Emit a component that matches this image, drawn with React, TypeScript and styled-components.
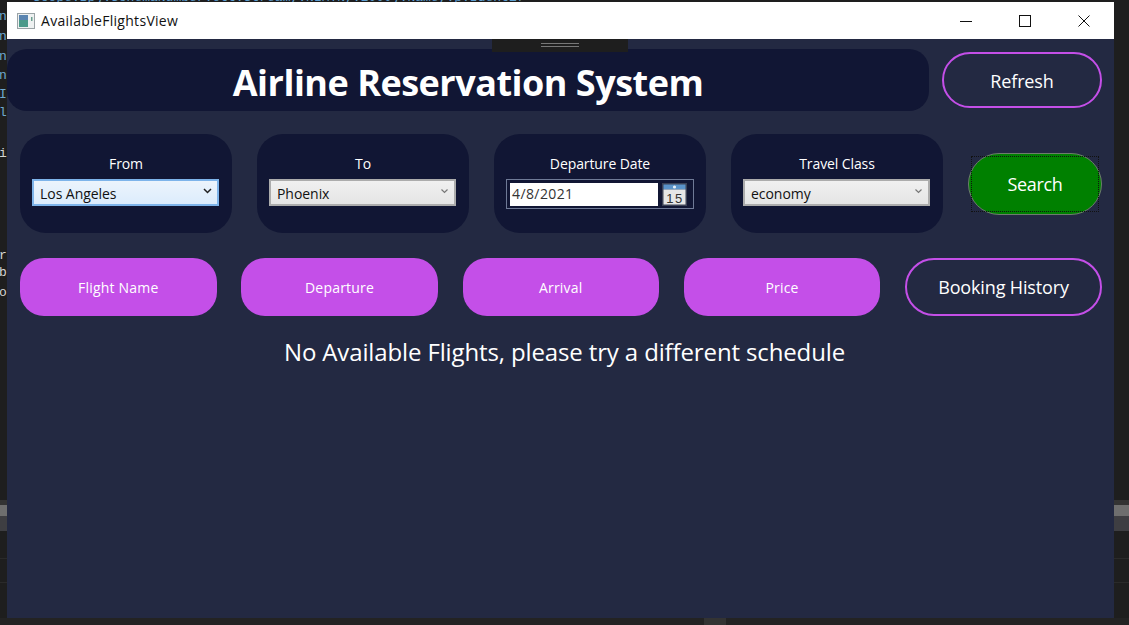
import React from "react";
import styled, { createGlobalStyle } from "styled-components";

const Global = createGlobalStyle`
  html, body { margin: 0; padding: 0; background: #1e1e1e; }
  body { font-family: "Open Sans", "Noto Sans", sans-serif; }
`;

const Desktop = styled.div`
  position: relative;
  width: 1129px;
  height: 625px;
  overflow: hidden;
  background: #1e1e1e;
`;
const CodeLine = styled.div<{ $top: number; $color: string }>`
  position: absolute;
  left: -1px;
  top: ${(p) => p.$top}px;
  font: 13px/16px "Liberation Mono", monospace;
  color: ${(p) => p.$color};
`;
const TopCode = styled.div`
  position: absolute;
  left: 33px;
  top: -10px;
  font: 13px/16px "Liberation Mono", monospace;
  color: #5f9fd0;
  white-space: pre;
`;
const Band = styled.div<{ $top: number; $h: number; $color: string }>`
  position: absolute;
  left: 0;
  right: 0;
  top: ${(p) => p.$top}px;
  height: ${(p) => p.$h}px;
  background: ${(p) => p.$color};
`;
const StatusChip = styled.div`
  position: absolute;
  left: 704px;
  top: 618px;
  width: 22px;
  height: 7px;
  background: #333;
`;
const Window = styled.div`
  position: absolute;
  left: 7px;
  top: 2px;
  width: 1107px;
  height: 616px;
  display: flex;
  flex-direction: column;
  background: #232942;
`;
const TitleBar = styled.div`
  height: 37px;
  flex: none;
  display: flex;
  align-items: center;
  background: #fff;
  color: #111;
  font-size: 14px;
  padding: 0 1px 0 10px;
`;
const TitleText = styled.span`
  margin-left: 6px;
  flex: 1;
  letter-spacing: 0.3px;
`;
const WinButton = styled.div`
  width: 59px;
  height: 37px;
  display: flex;
  align-items: center;
  justify-content: center;
`;
const Toolbar = styled.div`
  position: absolute;
  left: 485px;
  top: 37px;
  width: 136px;
  height: 13px;
  background: #1e1e1e;
  display: flex;
  align-items: flex-start;
  justify-content: center;
  padding-top: 4px;
  box-sizing: border-box;
`;
const Grip = styled.div`
  width: 38px;
  height: 4px;
  border-top: 1px solid #777;
  border-bottom: 1px solid #777;
  box-sizing: border-box;
`;
const Body = styled.div`
  flex: 1;
  display: flex;
  flex-direction: column;
  padding: 10px 12px 0 0;
`;
const HeaderRow = styled.div`
  display: flex;
  align-items: center;
  justify-content: space-between;
  height: 62px;
`;
const HeaderBar = styled.h1`
  margin: 0;
  width: 922px;
  height: 62px;
  box-sizing: border-box;
  padding-top: 4px;
  background: #111634;
  border-radius: 20px;
  color: #fff;
  display: flex;
  align-items: center;
  justify-content: center;
  font-size: 36px;
  font-weight: 700;
  letter-spacing: -0.5px;
`;
const OutlineButton = styled.button<{ $w: number; $h: number; $size: number; $pt: number }>`
  width: ${(p) => p.$w}px;
  height: ${(p) => p.$h}px;
  box-sizing: border-box;
  background: transparent;
  border: 2.5px solid #c44fe8;
  border-radius: ${(p) => p.$h / 2}px;
  color: #fff;
  font-family: inherit;
  font-size: ${(p) => p.$size}px;
  padding: ${(p) => p.$pt}px 0 0;
  letter-spacing: -0.15px;
`;
const SearchRow = styled.div`
  display: flex;
  align-items: center;
  justify-content: space-between;
  margin: 23px 0 0 13px;
`;
const Cards = styled.div`
  display: flex;
  gap: 25px;
`;
const Card = styled.div`
  width: 212px;
  height: 99px;
  box-sizing: border-box;
  padding-top: 20px;
  background: #111634;
  border-radius: 26px;
  display: flex;
  flex-direction: column;
  align-items: center;
`;
const Label = styled.div`
  color: #fff;
  font-size: 14px;
  line-height: 20px;
  letter-spacing: -0.1px;
  margin-bottom: 5px;
`;
const Select = styled.div<{ $focused?: boolean }>`
  width: 187px;
  height: 27px;
  align-self: flex-start;
  margin-left: 12px;
  box-sizing: border-box;
  border: 2px solid ${(p) => (p.$focused ? "#7eb4ea" : "#acacac")};
  background: ${(p) =>
    p.$focused
      ? "linear-gradient(#ecf4fc, #dcecfc)"
      : "linear-gradient(#f0f0f0, #e5e5e5)"};
  color: #111;
  font-size: 14px;
  letter-spacing: -0.05px;
  display: flex;
  align-items: center;
  justify-content: space-between;
  padding: 1px 5px 0 6px;
`;
const ChevronSvg = styled.svg`
  margin-bottom: 5px;
`;
const DateBox = styled.div`
  width: 188px;
  height: 30px;
  align-self: flex-start;
  margin-left: 12px;
  box-sizing: border-box;
  border: 1px solid #6f7a96;
  display: flex;
  align-items: center;
  padding: 0 6px 0 3px;
  gap: 4px;
`;
const DateInput = styled.div`
  width: 148px;
  height: 23px;
  background: #fff;
  color: #333;
  font-size: 14px;
  letter-spacing: 0.4px;
  line-height: 22px;
  padding-left: 2px;
  box-sizing: border-box;
`;
const SearchButton = styled.button`
  position: relative;
  width: 134px;
  height: 62px;
  box-sizing: border-box;
  border: 1px solid #6d7b6d;
  border-radius: 31px;
  background: #008000;
  color: #fff;
  font-family: inherit;
  font-size: 18px;
  letter-spacing: -0.3px;
  padding: 0;
`;
const FocusRing = styled.span`
  position: absolute;
  inset: 2px 2px 2px 2px;
  border: 1px dotted #111;
  pointer-events: none;
`;
const TableRow = styled.div`
  display: flex;
  align-items: center;
  justify-content: space-between;
  margin: 25px 0 0 13px;
`;
const ColumnHead = styled.div`
  width: 196.5px;
  height: 58px;
  border-radius: 24px;
  background: #c44fe8;
  color: #fff;
  font-size: 14px;
  letter-spacing: 0.2px;
  display: flex;
  align-items: center;
  justify-content: center;
`;
const EmptyText = styled.div`
  margin-top: 18px;
  padding-left: 20px;
  text-align: center;
  color: #fff;
  font-size: 24px;
  line-height: 36px;
  letter-spacing: -0.13px;
`;

const Chevron = ({ color, small }: { color: string; small?: boolean }) => (
  <ChevronSvg width="9" height="6" viewBox="0 0 9 6">
    <path
      d={small ? "M1.5 1.5l3 3 3-3" : "M1 1l3.5 3.5L8 1"}
      fill="none"
      stroke={color}
      strokeWidth={small ? 1.2 : 1.5}
    />
  </ChevronSvg>
);
const AppIcon = () => (
  <svg width="18" height="16" viewBox="0 0 18 16">
    <rect x="0.5" y="0.5" width="17" height="15" fill="#eef1f1" stroke="#9aa3a6" />
    <rect x="2" y="2" width="9" height="12" fill="#4c9a8a" />
    <rect x="2" y="2" width="9" height="5" fill="#5a84b0" />
    <rect x="14" y="4" width="1.5" height="4" fill="#6aa08f" />
  </svg>
);
const CalendarIcon = () => (
  <svg width="25" height="23" viewBox="0 0 25 23">
    <rect width="25" height="23" fill="#3c4256" />
    <rect x="1.5" y="1.5" width="22" height="5" fill="#5b93c9" />
    <circle cx="12.5" cy="4" r="1.6" fill="#e8f0f8" />
    <rect x="1.5" y="6.5" width="22" height="15" fill="#e6e6e6" />
    <text x="13" y="19.5" textAnchor="middle" fontSize="13" letterSpacing="1.5" fontFamily="Liberation Sans, sans-serif" fill="#333">15</text>
  </svg>
);

const codeLines: [number, string, string][] = [
  [9, "n", "#6fa8cf"],
  [29, "n", "#6fa8cf"],
  [49, "n", "#6fa8cf"],
  [68, "n", "#6fa8cf"],
  [87, "I", "#6fa8cf"],
  [105, "l", "#6fa8cf"],
  [146, "i", "#d4d4d4"],
  [248, "r", "#d4d4d4"],
  [265, "b", "#d4d4d4"],
  [285, "o", "#d4d4d4"],
];
const columns = ["Flight Name", "Departure", "Arrival", "Price"];

export default function App() {
  return (
    <Desktop>
      <Global />
      <TopCode>{"Scope.Bp).SchemaNumber.ott.Stream,.NLMTN,.2000).Name,.p.Identif"}</TopCode>
      {codeLines.map(([top, ch, color]) => (
        <CodeLine key={top} $top={top} $color={color}>{ch}</CodeLine>
      ))}
      <Band $top={500} $h={5} $color="#333" />
      <Band $top={505} $h={11} $color="#6e6e6e" />
      <Band $top={516} $h={15} $color="#3e3e42" />
      <Band $top={558} $h={1} $color="#2a2a2a" />
      <Band $top={582} $h={1} $color="#2a2a2a" />
      <Band $top={618} $h={7} $color="#232323" />
      <StatusChip />
      <Window>
        <TitleBar>
          <AppIcon />
          <TitleText>AvailableFlightsView</TitleText>
          <WinButton>
            <svg width="12" height="12" viewBox="0 0 12 12">
              <path d="M0 6.5h12" stroke="#111" />
            </svg>
          </WinButton>
          <WinButton>
            <svg width="12" height="12" viewBox="0 0 12 12">
              <rect x="0.5" y="0.5" width="11" height="11" fill="none" stroke="#111" />
            </svg>
          </WinButton>
          <WinButton>
            <svg width="12" height="12" viewBox="0 0 12 12">
              <path d="M0.5 0.5l11 11M11.5 0.5l-11 11" stroke="#111" />
            </svg>
          </WinButton>
        </TitleBar>
        <Toolbar><Grip /></Toolbar>
        <Body>
          <HeaderRow>
            <HeaderBar>Airline Reservation System</HeaderBar>
            <OutlineButton $w={160} $h={56} $size={18} $pt={1}>Refresh</OutlineButton>
          </HeaderRow>
          <SearchRow>
            <Cards>
              <Card>
                <Label>From</Label>
                <Select $focused>Los Angeles<Chevron color="#222" /></Select>
              </Card>
              <Card>
                <Label>To</Label>
                <Select>Phoenix<Chevron color="#777" small /></Select>
              </Card>
              <Card>
                <Label>Departure Date</Label>
                <DateBox>
                  <DateInput>4/8/2021</DateInput>
                  <CalendarIcon />
                </DateBox>
              </Card>
              <Card>
                <Label>Travel Class</Label>
                <Select>economy<Chevron color="#777" small /></Select>
              </Card>
            </Cards>
            <SearchButton>Search<FocusRing /></SearchButton>
          </SearchRow>
          <TableRow>
            {columns.map((c) => (
              <ColumnHead key={c}>{c}</ColumnHead>
            ))}
            <OutlineButton $w={197} $h={58} $size={18} $pt={0}>Booking History</OutlineButton>
          </TableRow>
          <EmptyText>No Available Flights, please try a different schedule</EmptyText>
        </Body>
      </Window>
    </Desktop>
  );
}
